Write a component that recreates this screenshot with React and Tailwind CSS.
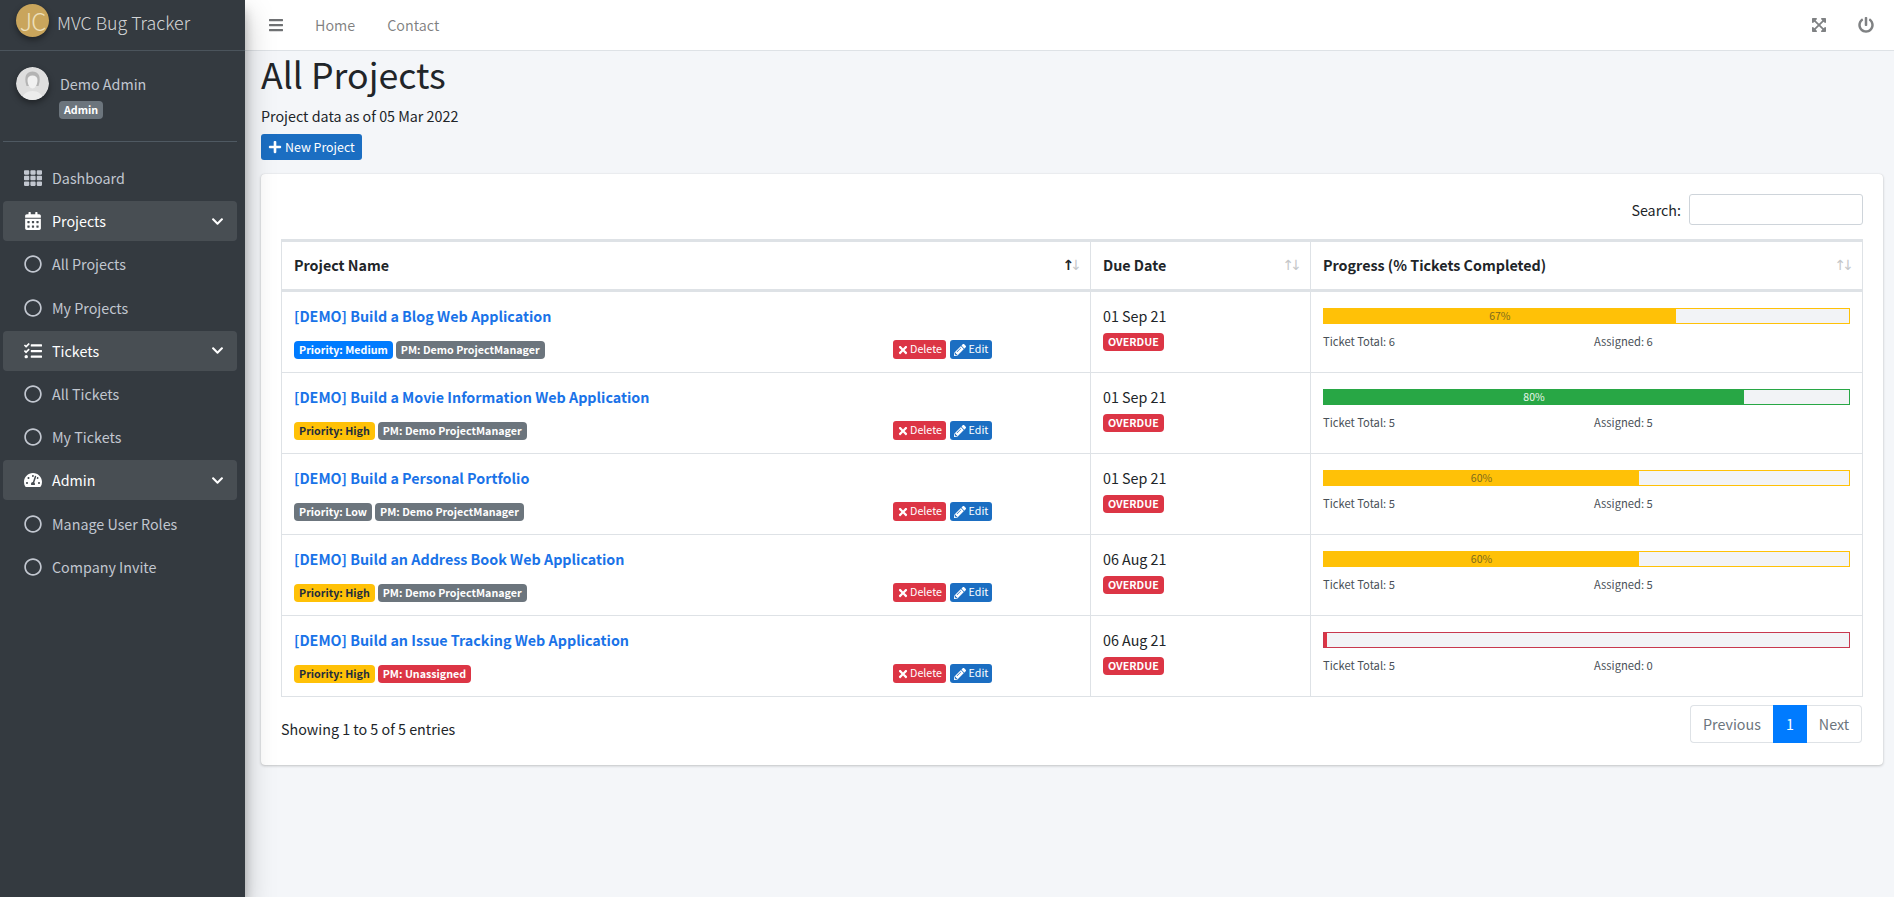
import React from "react";
import { FaTh, FaCalendarAlt, FaTasks, FaTachometerAlt, FaChevronDown, FaRegCircle, FaPlus, FaTimes, FaPencilAlt, FaBars, FaExpandArrowsAlt, FaPowerOff } from "react-icons/fa";

const FONT = "font-['Noto_Sans_CJK_SC','Source_Sans_Pro',sans-serif]";

function NavLink({ icon, label, active, chevron }) {
  return (
    <div className={`mb-[3.2px] flex h-10 items-center rounded pl-[20px] pr-[13px] ${active ? "bg-[rgba(255,255,255,0.1)] text-white" : "text-[#c2c7d0]"}`}>
      <span className="flex w-[20px] justify-center text-[18px]">{icon}</span>
      <span className="ml-[9px] flex-1 text-[14.3px] leading-6">{label}</span>
      {chevron && <FaChevronDown className="text-[13px]" />}
    </div>
  );
}

function Badge({ color, children }) {
  return <span className={`inline-block rounded-[4px] px-[5px] py-[3px] text-[10.7px] font-bold leading-[12px] ${color}`}>{children}</span>;
}

function SortIcon({ active }) {
  return (
    <span className="mr-[-4px] flex font-['DejaVu_Sans',sans-serif] text-[14px] font-normal leading-none text-[#c5c7c9]">
      <span className={`tracking-[-4px] ${active ? "font-bold text-[#212529]" : ""}`}>↑</span>
      <span>↓</span>
    </span>
  );
}

const BLUE = "bg-[#007bff] text-white";
const GRAY = "bg-[#6c757d] text-white";
const YEL = "bg-[#ffc107] text-[#1f2d3d]";
const RED = "bg-[#dc3545] text-white";

const rows = [
  { name: "[DEMO] Build a Blog Web Application", pr: "Medium", prc: BLUE, pm: "PM: Demo ProjectManager", pmc: GRAY, date: "01 Sep 21", pct: 67, color: "y", total: 6, assigned: 6 },
  { name: "[DEMO] Build a Movie Information Web Application", pr: "High", prc: YEL, pm: "PM: Demo ProjectManager", pmc: GRAY, date: "01 Sep 21", pct: 80, color: "g", total: 5, assigned: 5 },
  { name: "[DEMO] Build a Personal Portfolio", pr: "Low", prc: GRAY, pm: "PM: Demo ProjectManager", pmc: GRAY, date: "01 Sep 21", pct: 60, color: "y", total: 5, assigned: 5 },
  { name: "[DEMO] Build an Address Book Web Application", pr: "High", prc: YEL, pm: "PM: Demo ProjectManager", pmc: GRAY, date: "06 Aug 21", pct: 60, color: "y", total: 5, assigned: 5 },
  { name: "[DEMO] Build an Issue Tracking Web Application", pr: "High", prc: YEL, pm: "PM: Unassigned", pmc: RED, date: "06 Aug 21", pct: 0, color: "r", total: 5, assigned: 0 },
];

function Progress({ pct, color }) {
  const border = color === "y" ? "border-[#ffc107]" : color === "g" ? "border-[#28a745]" : "border-[#c8384e]";
  const fill = color === "y" ? "bg-[#ffc107] text-[#7c6a1e]" : color === "g" ? "bg-[#28a745] text-[#e8f6eb]" : "bg-[#dc3545]";
  return (
    <div className={`flex h-[16px] border ${border} bg-[#f2f3f6]`}>
      <div className={`flex items-center justify-center text-[10.5px] leading-none ${fill}`} style={{ width: pct === 0 ? "3px" : `${pct}%` }}>
        {pct > 0 ? `${pct}%` : ""}
      </div>
    </div>
  );
}

function Avatar() {
  return (
    <svg viewBox="0 0 33 33" className="h-[33px] w-[33px] rounded-full shadow-[0_3px_6px_rgba(0,0,0,0.4)]">
      <circle cx="16.5" cy="16.500" r="16.500" fill="#dedede" />
      <path d="M9.500 15c-1-7 2-10.500 7-10.500s8 3.500 7 10.500l-1 4h-12z" fill="#b4b4b4" />
      <path d="M11.500 13c0-3 2-4.500 5-4.500s5 1.500 5 4.500c0 4-2 8.500-5 8.500s-5-4.500-5-8.500z" fill="#f1f1f1" />
      <path d="M6 33c.5-6 5-9 10.500-9s10 3 10.500 9z" fill="#ececec" />
    </svg>
  );
}

const thClass = "h-[53px] border-t-[3px] border-b-[3px] border-r border-[#dee2e6] px-3 pb-[2px] text-[14.3px] font-bold";
const tdClass = "h-[81px] border-b border-r border-[#dee2e6] px-3 align-top";

export default function App() {
  return (
    <div className={`flex min-h-[897px] bg-[#f4f6f9] text-[14.3px] text-[#212529] ${FONT}`}>
      <aside className="relative z-10 flex w-[245px] shrink-0 flex-col bg-[#343a40] shadow-[0_14px_28px_rgba(0,0,0,0.25),0_10px_10px_rgba(0,0,0,0.22)]">
        <div className="flex h-[51px] items-start border-b border-[#4b545c] pl-4 pt-1">
          <div className="flex h-[33px] w-[33px] items-center justify-center rounded-full bg-[#c9a55c] text-[24px] font-light leading-none tracking-[-1px] text-[#eee0bd] shadow-[0_3px_6px_rgba(0,0,0,0.4)]">JC</div>
          <span className="ml-2 text-[17.8px] font-light leading-[36px] text-[rgba(255,255,255,0.8)]">MVC Bug Tracker</span>
        </div>
        <div className="mx-[3px] mr-[8px] flex h-[91px] border-b border-[#4f5962] pl-[13px] pt-4">
          <Avatar />
          <div className="ml-[10px] flex flex-col items-start">
            <span className="ml-[1px] mt-[5px] text-[14.3px] leading-6 text-[#c2c7d0]">Demo Admin</span>
            <span className="mt-[5px] rounded-[4px] bg-[#6c757d] px-[5px] py-[3px] text-[10.7px] font-bold leading-[12px] text-white">Admin</span>
          </div>
        </div>
        <nav className="ml-[3px] mr-[8px] mt-4">
          <NavLink icon={<FaTh />} label="Dashboard" />
          <NavLink active icon={<FaCalendarAlt />} label="Projects" chevron />
          <NavLink icon={<FaRegCircle />} label="All Projects" />
          <NavLink icon={<FaRegCircle />} label="My Projects" />
          <NavLink active icon={<FaTasks />} label="Tickets" chevron />
          <NavLink icon={<FaRegCircle />} label="All Tickets" />
          <NavLink icon={<FaRegCircle />} label="My Tickets" />
          <NavLink active icon={<FaTachometerAlt />} label="Admin" chevron />
          <NavLink icon={<FaRegCircle />} label="Manage User Roles" />
          <NavLink icon={<FaRegCircle />} label="Company Invite" />
        </nav>
      </aside>
      <div className="flex min-w-0 flex-1 flex-col">
        <header className="flex h-[51px] shrink-0 items-center border-b border-[#dee2e6] bg-white pl-[23px] pr-[20px] text-[rgba(0,0,0,0.5)]">
          <FaBars className="text-[16px] text-[#6f7173]" />
          <span className="ml-[31px] text-[14.3px]">Home</span>
          <span className="ml-[32px] text-[14.3px]">Contact</span>
          <FaExpandArrowsAlt className="ml-auto text-[16px] text-[#7f8183]" />
          <FaPowerOff className="ml-[31px] text-[16px] text-[#7f8183]" />
        </header>
        <main className="pl-[16px] pr-[11px]">
          <h1 className="text-[35.7px] font-normal leading-[46px] text-[#212529]">All Projects</h1>
          <p className="mt-[7px] text-[14.3px] leading-6">Project data as of 05 Mar 2022</p>
          <button className="mt-[6px] flex h-[26px] items-center gap-[3px] rounded-[3px] bg-[#1b6ec2] px-[7px] text-[12.4px] leading-none text-white">
            <FaPlus className="text-[14px]" />New Project
          </button>
          <section className="mt-[14px] rounded-[4px] bg-white px-[20px] pb-[22px] pt-[20px] shadow-[0_0_1px_rgba(0,0,0,0.125),0_1px_3px_rgba(0,0,0,0.2)]">
            <div className="flex items-center justify-end">
              <label className="text-[14.3px]">Search:</label>
              <div className="ml-2 h-[31px] w-[174px] rounded-[3px] border border-[#ced4da] bg-white" />
            </div>
            <table className="mt-[14px] w-full table-fixed border-separate border-spacing-0">
              <colgroup>
                <col className="w-[810px]" />
                <col className="w-[220px]" />
                <col />
              </colgroup>
              <thead>
                <tr className="text-left">
                  <th className={`${thClass} border-l`}><div className="flex items-center justify-between">Project Name<SortIcon active /></div></th>
                  <th className={thClass}><div className="flex items-center justify-between">Due Date<SortIcon /></div></th>
                  <th className={thClass}><div className="flex items-center justify-between">Progress (% Tickets Completed)<SortIcon /></div></th>
                </tr>
              </thead>
              <tbody>
                {rows.map((r) => (
                  <tr key={r.name}>
                    <td className={`${tdClass} border-l`}>
                      <div className="mt-[12px] text-[14.3px] font-semibold leading-6 text-[#1a73e8]">{r.name}</div>
                      <div className="mt-[12px] flex items-end gap-[3px]">
                        <Badge color={r.prc}>Priority: {r.pr}</Badge>
                        <Badge color={r.pmc}>{r.pm}</Badge>
                        <div className="ml-auto mr-[86px] flex gap-[4px]">
                          <span className="flex h-[19px] w-[53px] items-center justify-center gap-[1px] rounded-[3px] bg-[#dc3545] text-[10.7px] leading-none text-white"><FaTimes className="text-[12px]" />Delete</span>
                          <span className="flex h-[19px] w-[42px] items-center justify-center gap-[3px] rounded-[3px] bg-[#1b6ec2] text-[10.7px] leading-none text-white"><FaPencilAlt className="text-[12px]" />Edit</span>
                        </div>
                      </div>
                    </td>
                    <td className={tdClass}>
                      <div className="mt-[12px] text-[14.3px] leading-6">{r.date}</div>
                      <div className="mt-[5px] flex"><span className="rounded-[4px] bg-[#dc3545] px-[5px] py-[3px] text-[10.7px] font-bold leading-[12px] text-white">OVERDUE</span></div>
                    </td>
                    <td className={tdClass}>
                      <div className="mt-[16px]"><Progress pct={r.pct} color={r.color} /></div>
                      <div className="mt-[8px] flex text-[11.2px] leading-[18px] text-[#495057]">
                        <span className="w-[271px]">Ticket Total: {r.total}</span>
                        <span>Assigned: {r.assigned}</span>
                      </div>
                    </td>
                  </tr>
                ))}
              </tbody>
            </table>
            <div className="mt-[8px] flex items-center justify-between">
              <span className="mt-[10px] text-[14.3px]">Showing 1 to 5 of 5 entries</span>
              <div className="mr-[1px] flex h-[38px] items-center text-[14.3px] text-[#6c757d]">
                <span className="flex h-full w-[83px] items-center justify-center rounded-l border border-r-0 border-[#dee2e6] bg-white">Previous</span>
                <span className="flex h-full w-[34px] items-center justify-center bg-[#007bff] text-white">1</span>
                <span className="flex h-full w-[55px] items-center justify-center rounded-r border border-l-0 border-[#dee2e6] bg-white">Next</span>
              </div>
            </div>
          </section>
        </main>
      </div>
    </div>
  );
}
